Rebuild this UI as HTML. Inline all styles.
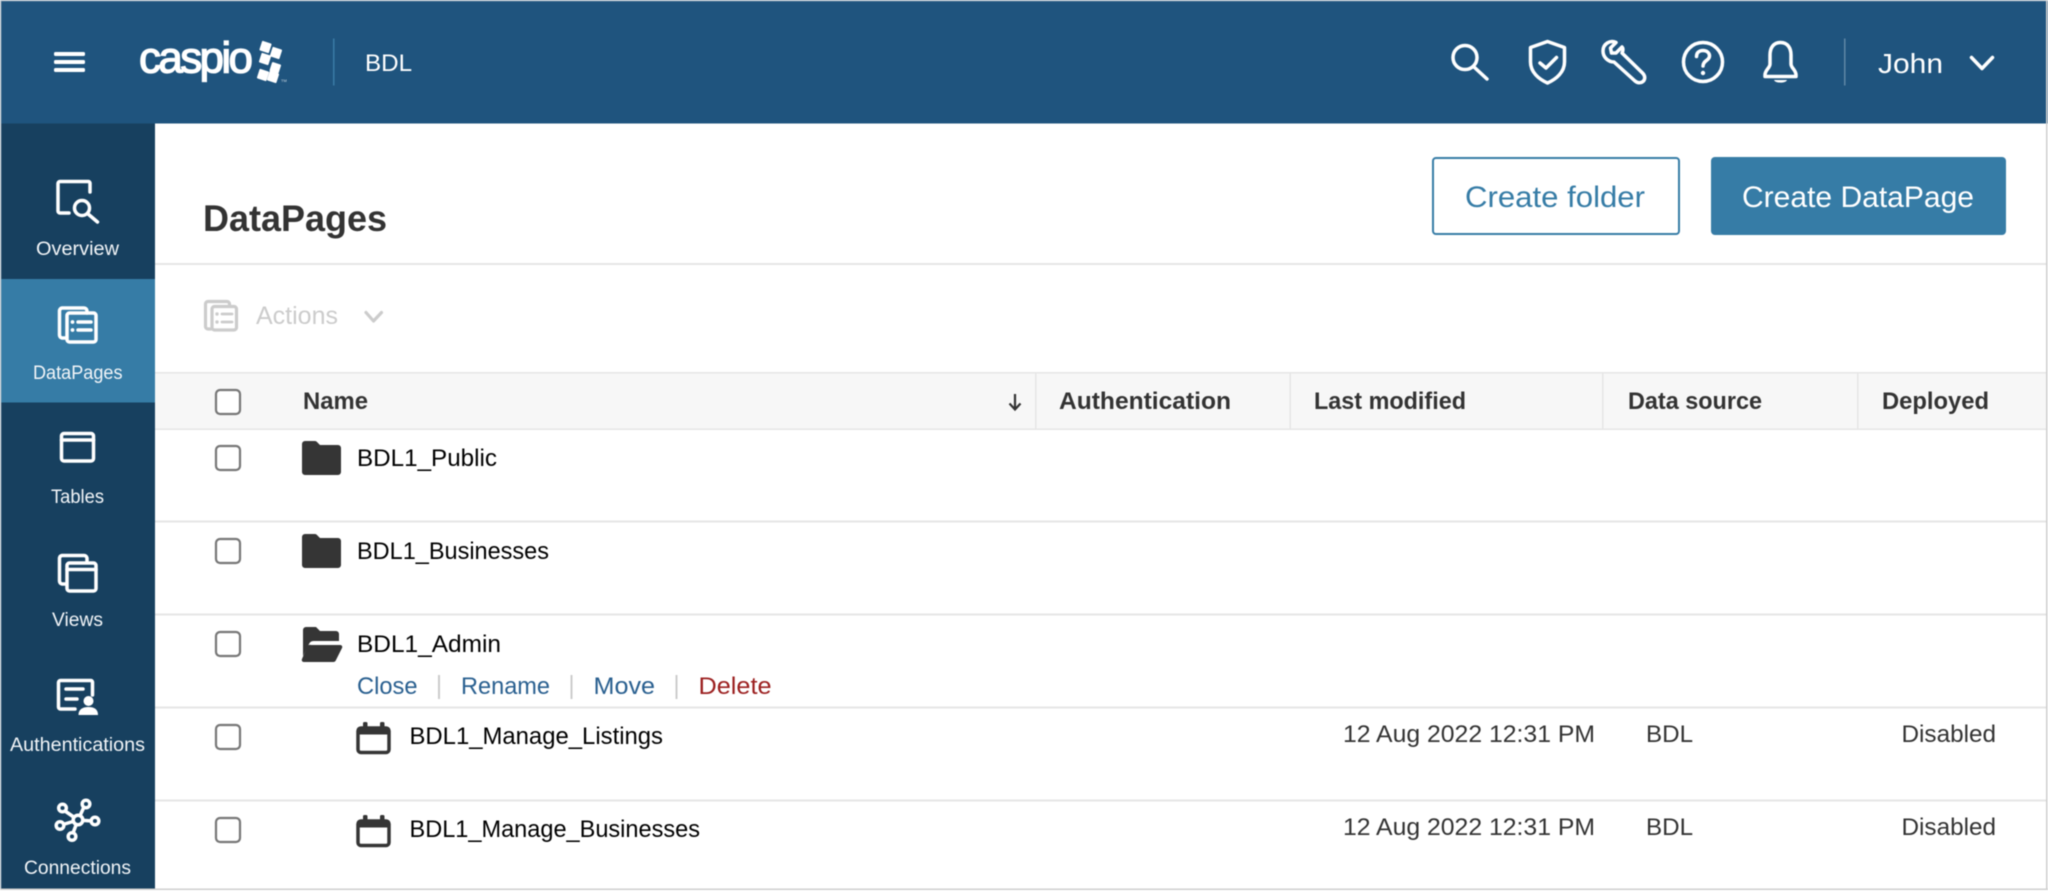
<!DOCTYPE html>
<html lang="en">
<head>
<meta charset="utf-8">
<title>DataPages</title>
<style>
html,body{margin:0;padding:0;background:#fff;width:2048px;height:893px;overflow:hidden}
svg{display:block;position:absolute;left:0;top:0;filter:blur(.45px)}
text{font-family:"Liberation Sans",Arial,sans-serif}
.w{fill:none;stroke:#fff;stroke-width:3.5;stroke-linecap:round;stroke-linejoin:round}
.cb{fill:#fff;stroke:#777;stroke-width:2.2}
.sep{fill:#e6e6e6}
.r{font-size:24px;fill:#000}
.d{font-size:24px;fill:#333}
.h{font-size:24px;font-weight:700;fill:#333}
.n{font-size:19px;fill:#f2f5f8}
.l{font-size:24px;fill:#2a6090}
</style>
</head>
<body>
<svg width="2048" height="893" viewBox="0 0 2048 893" xmlns="http://www.w3.org/2000/svg">
<rect width="2048" height="893" fill="#fff"/>
<!-- header -->
<rect x="0" y="0" width="2048" height="123.5" fill="#1f547e"/>
<g fill="#fff">
<rect x="54" y="52" width="31" height="4" rx="1.5"/>
<rect x="54" y="60" width="31" height="4" rx="1.5"/>
<rect x="54" y="68" width="31" height="4" rx="1.5"/>
</g>
<!-- logo -->
<text x="139" y="72.5" font-size="44" fill="#fff" stroke="#fff" stroke-width="1.3" textLength="114" lengthAdjust="spacing">caspio</text>
<g fill="#fff">
<rect x="260.5" y="42" width="10" height="10" rx="1" transform="rotate(18 265.5 47)"/>
<rect x="271" y="48" width="10" height="10" rx="1" transform="rotate(18 276 53)"/>
<rect x="260" y="54" width="10" height="10" rx="1" transform="rotate(18 265 59)"/>
<rect x="270.5" y="63" width="9.5" height="9.5" rx="1" transform="rotate(18 275 68)"/>
<rect x="258" y="70" width="10" height="10" rx="1" transform="rotate(18 263 75)"/>
<rect x="268" y="72" width="10" height="10" rx="1" transform="rotate(18 273 77)"/>
</g>
<text x="281" y="82" font-size="4" fill="#cfdbe5">TM</text>
<rect x="333" y="38.5" width="1.5" height="47" fill="#3a7ba6"/>
<text x="365" y="71" font-size="24" fill="#fff" textLength="47" lengthAdjust="spacingAndGlyphs">BDL</text>

<!-- header icons -->
<circle cx="1465" cy="57.5" r="12" class="w"/>
<path d="M1474 67L1487 79" class="w"/>
<path d="M1547.5 41.5L1530.5 47.5V62C1530.5 72 1538.5 79 1547.5 83C1556.5 79 1564.5 72 1564.5 62V47.5Z" class="w"/>
<path d="M1540 63L1546 68L1556.5 57.5" class="w"/>
<path d="M1616 42.5C1610 39.5 1603 44 1603 51C1603 57 1608 62 1614 62L1635 81C1638 83.5 1641.5 83 1643.5 81C1645.5 78.5 1645 75.5 1642.5 73L1622 53C1623.5 50.5 1623 48 1622 47L1616 53H1611.5L1610.5 48Z" class="w"/>
<circle cx="1703" cy="62" r="19.5" class="w"/>
<path d="M1696.5 56.5C1696.5 52.5 1699.5 50.5 1703 50.5C1706.5 50.5 1709.5 52.5 1709.5 56C1709.5 60.5 1703 60.5 1703 66" class="w"/>
<circle cx="1703" cy="73" r="2.2" fill="#fff"/>
<path d="M1780.5 42.5C1773 42.5 1770 48.5 1770 55V64C1770 68 1765 70 1765 75V76.5H1796V75C1796 70 1791 68 1791 64V55C1791 48.5 1788 42.5 1780.5 42.5Z" class="w"/>
<path d="M1774 80H1787C1786 83.5 1775 83.5 1774 80Z" fill="#fff"/>
<rect x="1844" y="38.5" width="1.5" height="47" fill="#5f87a5"/>
<text x="1878" y="73" font-size="28" fill="#fff" textLength="65" lengthAdjust="spacingAndGlyphs">John</text>
<path d="M1971.5 57.5L1982 68.5L1992.5 57.5" class="w"/>

<!-- sidebar -->
<rect x="0" y="123.5" width="155" height="765" fill="#17405f"/>
<rect x="0" y="279" width="155" height="123.5" fill="#367ca6"/>

<!-- overview -->
<path d="M90 192V183A2 2 0 0 0 88 181.5H60A2 2 0 0 0 58 183.5V211A2 2 0 0 0 60 213H69" class="w"/>
<circle cx="82" cy="208" r="7.5" class="w"/>
<path d="M87.5 213.5L97.5 222" class="w"/>
<text x="36" y="255" class="n" textLength="83" lengthAdjust="spacingAndGlyphs">Overview</text>

<!-- datapages -->
<path d="M66 338H62A3 3 0 0 1 59.5 335V311A3 3 0 0 1 62 308H84A3 3 0 0 1 87 311V313" class="w"/>
<rect x="67" y="313" width="29" height="29" rx="2.5" class="w"/>
<path d="M78 322H91M78 330H91" class="w"/>
<circle cx="72.5" cy="322" r="1.9" fill="#fff"/><circle cx="72.5" cy="330" r="1.9" fill="#fff"/>
<text x="33" y="379" class="n" textLength="89.5" lengthAdjust="spacingAndGlyphs">DataPages</text>

<!-- tables -->
<rect x="61.5" y="433.5" width="32" height="27.5" rx="2.5" class="w"/>
<path d="M61.5 440H93.5" class="w"/>
<text x="51" y="503" class="n" textLength="53" lengthAdjust="spacingAndGlyphs">Tables</text>

<!-- views -->
<path d="M66 584H62A3 3 0 0 1 59.5 581V558A3 3 0 0 1 62 555.5H84A3 3 0 0 1 87 558V561" class="w"/>
<rect x="67" y="563" width="29" height="28" rx="2.5" class="w"/>
<path d="M67 569.5H96" class="w"/>
<text x="52" y="626" class="n" textLength="51" lengthAdjust="spacingAndGlyphs">Views</text>

<!-- authentications -->
<path d="M92.5 695V682A2 2 0 0 0 90.5 680.5H60.5A2 2 0 0 0 58.5 682.5V707A2 2 0 0 0 60.5 709H75" class="w"/>
<path d="M66 689H83M66 699H77" class="w"/>
<circle cx="88.5" cy="701" r="5" fill="#fff"/>
<path d="M78.5 715C78.5 709 83 707 88.5 707C94 707 98 709 98 715Z" fill="#fff"/>
<text x="10" y="751" class="n" textLength="135" lengthAdjust="spacingAndGlyphs">Authentications</text>

<!-- connections -->
<path d="M78 820L65 811M78 820L84 807M78 820L92 821M78 820L63 824.5M78 820L73 833" class="w"/>
<circle cx="78" cy="820" r="4.8" class="w" style="fill:#17405f"/>
<circle cx="62.5" cy="808" r="3.8" class="w" style="fill:#17405f"/>
<circle cx="86" cy="804" r="3.8" class="w" style="fill:#17405f"/>
<circle cx="95" cy="821" r="3.8" class="w" style="fill:#17405f"/>
<circle cx="60" cy="825.5" r="3.8" class="w" style="fill:#17405f"/>
<circle cx="72" cy="836.5" r="3.8" class="w" style="fill:#17405f"/>
<text x="24" y="874" class="n" textLength="107" lengthAdjust="spacingAndGlyphs">Connections</text>

<!-- title + buttons -->
<text x="203" y="231" font-size="37" font-weight="700" fill="#333" textLength="184" lengthAdjust="spacingAndGlyphs">DataPages</text>
<rect x="1433" y="158" width="246" height="76" rx="3" fill="#fff" stroke="#367ca6" stroke-width="2"/>
<text x="1465" y="207" font-size="30" fill="#367ca6" textLength="180" lengthAdjust="spacingAndGlyphs">Create folder</text>
<rect x="1711" y="157" width="295" height="78" rx="4" fill="#367ca6"/>
<text x="1742" y="207" font-size="30" fill="#fff" textLength="232" lengthAdjust="spacingAndGlyphs">Create DataPage</text>
<rect x="155" y="263" width="1891" height="2" class="sep"/>

<!-- actions -->
<g fill="none" stroke="#ccc" stroke-width="3.2" stroke-linejoin="round" stroke-linecap="round">
<path d="M211 329H208A2.5 2.5 0 0 1 205.5 326.5V304A2.5 2.5 0 0 1 208 301.5H227A2.5 2.5 0 0 1 229.5 304V306"/>
<rect x="212" y="306.5" width="24.5" height="23.5" rx="2.5"/>
<path d="M222 314H232M222 322H232" stroke-width="2.8"/>
<path d="M366 312.5L373.5 321L381.5 312.5"/>
</g>
<circle cx="217" cy="314" r="1.7" fill="#ccc"/><circle cx="217" cy="322" r="1.7" fill="#ccc"/>
<text x="256" y="324" font-size="25" fill="#ccc" textLength="82" lengthAdjust="spacingAndGlyphs">Actions</text>

<!-- table header -->
<rect x="155" y="373" width="1891" height="56" fill="#f7f7f7"/>
<rect x="155" y="372" width="1891" height="1.5" class="sep"/>
<rect x="155" y="428.5" width="1891" height="1.5" class="sep"/>
<rect x="1035" y="373" width="1.5" height="56" class="sep"/>
<rect x="1289.5" y="373" width="1.5" height="56" class="sep"/>
<rect x="1602" y="373" width="1.5" height="56" class="sep"/>
<rect x="1857" y="373" width="1.5" height="56" class="sep"/>
<rect x="216" y="390" width="24" height="24" rx="4" class="cb"/>
<text x="303" y="409" class="h" textLength="65" lengthAdjust="spacingAndGlyphs">Name</text>
<path d="M1015 394V409M1009.5 403.5L1015 409.5L1020.5 403.5" fill="none" stroke="#333" stroke-width="2.2"/>
<text x="1059" y="409" class="h" textLength="172" lengthAdjust="spacingAndGlyphs">Authentication</text>
<text x="1314" y="409" class="h" textLength="152" lengthAdjust="spacingAndGlyphs">Last modified</text>
<text x="1628" y="409" class="h" textLength="134" lengthAdjust="spacingAndGlyphs">Data source</text>
<text x="1882" y="409" class="h" textLength="107" lengthAdjust="spacingAndGlyphs">Deployed</text>

<!-- rows -->
<rect x="155" y="520.5" width="1891" height="2" class="sep"/>
<rect x="155" y="613.5" width="1891" height="2" class="sep"/>
<rect x="155" y="706.5" width="1891" height="2" class="sep"/>
<rect x="155" y="799.5" width="1891" height="2" class="sep"/>

<rect x="216" y="446" width="24" height="24" rx="4" class="cb"/>
<rect x="216" y="539" width="24" height="24" rx="4" class="cb"/>
<rect x="216" y="632" width="24" height="24" rx="4" class="cb"/>
<rect x="216" y="725" width="24" height="24" rx="4" class="cb"/>
<rect x="216" y="818" width="24" height="24" rx="4" class="cb"/>

<!-- folders -->
<path d="M302 444a3 3 0 0 1 3-3h10a3 3 0 0 1 2 1l3 3h18a3 3 0 0 1 3 3v24a3 3 0 0 1-3 3h-33a3 3 0 0 1-3-3z" fill="#353535"/>
<path d="M302 537a3 3 0 0 1 3-3h10a3 3 0 0 1 2 1l3 3h18a3 3 0 0 1 3 3v24a3 3 0 0 1-3 3h-33a3 3 0 0 1-3-3z" fill="#353535"/>
<path d="M303 630a3 3 0 0 1 3-3h10l4 4h16a3 3 0 0 1 3 3v7h-25a5 5 0 0 0-5 3l-6 12z" fill="#353535"/>
<path d="M311 645h29a2 2 0 0 1 2 3l-6 12a3 3 0 0 1-3 2h-29a2 2 0 0 1-2-3l5-12a3 3 0 0 1 4-2z" fill="#353535"/>

<text x="357" y="466" class="r" textLength="140" lengthAdjust="spacingAndGlyphs">BDL1_Public</text>
<text x="357" y="559" class="r" textLength="192" lengthAdjust="spacingAndGlyphs">BDL1_Businesses</text>
<text x="357" y="652" class="r" textLength="144" lengthAdjust="spacingAndGlyphs">BDL1_Admin</text>

<text x="357" y="694" class="l" textLength="60.5" lengthAdjust="spacingAndGlyphs">Close</text>
<rect x="438" y="675" width="2" height="24" fill="#ccc"/>
<text x="461" y="694" class="l" textLength="89" lengthAdjust="spacingAndGlyphs">Rename</text>
<rect x="570.5" y="675" width="2" height="24" fill="#ccc"/>
<text x="593.5" y="694" class="l" textLength="61.5" lengthAdjust="spacingAndGlyphs">Move</text>
<rect x="675.5" y="675" width="2" height="24" fill="#ccc"/>
<text x="698.5" y="694" font-size="24" fill="#9c2020" textLength="73" lengthAdjust="spacingAndGlyphs">Delete</text>

<!-- calendars -->
<g fill="none" stroke="#353535" stroke-width="3.5">
<rect x="358" y="728" width="31" height="24.5" rx="3"/>
<rect x="358" y="821" width="31" height="24.5" rx="3"/>
</g>
<g fill="#353535">
<rect x="357" y="727" width="33" height="7.5" rx="2.5"/>
<rect x="363" y="722" width="4.5" height="7" rx="1.5"/>
<rect x="380" y="722" width="4.5" height="7" rx="1.5"/>
<rect x="357" y="820" width="33" height="7.5" rx="2.5"/>
<rect x="363" y="815" width="4.5" height="7" rx="1.5"/>
<rect x="380" y="815" width="4.5" height="7" rx="1.5"/>
</g>

<text x="409.5" y="744" class="r" textLength="253.5" lengthAdjust="spacingAndGlyphs">BDL1_Manage_Listings</text>
<text x="409.5" y="837" class="r" textLength="290.5" lengthAdjust="spacingAndGlyphs">BDL1_Manage_Businesses</text>

<text x="1343" y="742" class="d" textLength="252" lengthAdjust="spacingAndGlyphs">12 Aug 2022 12:31 PM</text>
<text x="1646" y="742" class="d" textLength="47" lengthAdjust="spacingAndGlyphs">BDL</text>
<text x="1901.5" y="742" class="d" textLength="94.5" lengthAdjust="spacingAndGlyphs">Disabled</text>
<text x="1343" y="835" class="d" textLength="252" lengthAdjust="spacingAndGlyphs">12 Aug 2022 12:31 PM</text>
<text x="1646" y="835" class="d" textLength="47" lengthAdjust="spacingAndGlyphs">BDL</text>
<text x="1901.5" y="835" class="d" textLength="94.5" lengthAdjust="spacingAndGlyphs">Disabled</text>

<!-- outer edges -->
<rect x="0" y="0" width="2048" height="1.2" fill="#b8c4cd"/>
<rect x="0" y="0" width="1.3" height="890" fill="#b8c4cd"/>
<rect x="2046" y="0" width="1.5" height="890" fill="#cfcfcf"/>
<rect x="0" y="888.5" width="2048" height="1.5" fill="#cfcfcf"/>
</svg>
</body>
</html>
